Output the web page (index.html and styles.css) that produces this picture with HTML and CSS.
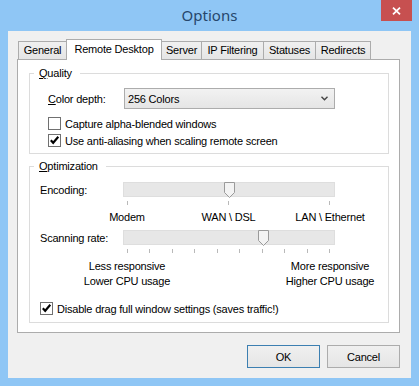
FILE: index.html
```html
<!DOCTYPE html>
<html>
<head>
<meta charset="utf-8">
<title>Options</title>
<link rel="stylesheet" href="styles.css">
</head>
<body>
<div class="window">
  <div class="titlebar">
    <span></span>
    <div class="title">Options</div>
    <div class="close-wrap">
      <button class="close" aria-label="Close">
        <svg width="9" height="8" viewBox="0 0 9 8"><path d="M1 0.7 L8 7.3 M8 0.7 L1 7.3" stroke="#fff" stroke-width="1.8" fill="none"/></svg>
      </button>
    </div>
  </div>
  <div class="client">
    <div class="tabs">
      <div class="tab t-general">General</div>
      <div class="tab active t-remote">Remote Desktop</div>
      <div class="tab t-server">Server</div>
      <div class="tab t-ip">IP Filtering</div>
      <div class="tab t-status">Statuses</div>
      <div class="tab t-redir">Redirects</div>
    </div>
    <div class="page">
      <fieldset class="group">
        <legend><u>Q</u>uality</legend>
        <div class="qbody">
          <div class="depth">
            <span class="label"><u>C</u>olor depth:</span>
            <div class="select">
              <span>256 Colors</span>
              <svg width="7" height="5" viewBox="0 0 7 5"><path d="M0.5 0.8 L3.5 3.8 L6.5 0.8" stroke="#444" stroke-width="1.4" fill="none"/></svg>
            </div>
          </div>
          <div class="check first">
            <span class="cb"></span>
            <span>Capture alpha-blended windows</span>
          </div>
          <div class="check">
            <span class="cb"><svg width="11" height="11" viewBox="0 0 11 11"><path d="M1.8 5.2 L4.2 7.8 L9.3 1.8" stroke="#000" stroke-width="2.1" fill="none"/></svg></span>
            <span>Use anti-aliasing when scaling remote screen</span>
          </div>
        </div>
      </fieldset>
      <fieldset class="group opt">
        <legend><u>O</u>ptimization</legend>
        <div class="obody">
          <div class="srow">
            <span class="slabel">Encoding:</span>
            <div class="track">
              <svg class="thumb" style="left:100px" width="11" height="16" viewBox="0 0 11 16"><path d="M0.5 0.5 H10.5 V10.5 L5.5 15.5 L0.5 10.5 Z" fill="#f3f3f3" stroke="#9a9a9a"/></svg>
            </div>
          </div>
          <div class="ticks"><i></i><i></i><i></i></div>
          <div class="marks">
            <span>Modem</span>
            <span>WAN \ DSL</span>
            <span>LAN \ Ethernet</span>
          </div>
          <div class="srow second">
            <span class="slabel">Scanning rate:</span>
            <div class="track">
              <svg class="thumb" style="left:134px" width="11" height="16" viewBox="0 0 11 16"><path d="M0.5 0.5 H10.5 V10.5 L5.5 15.5 L0.5 10.5 Z" fill="#f3f3f3" stroke="#9a9a9a"/></svg>
            </div>
          </div>
          <div class="ticks"><i></i><i></i><i></i><i></i><i></i><i></i><i></i><i></i><i></i><i></i></div>
          <div class="marks two">
            <span><b>Less responsive</b><b>Lower CPU usage</b></span>
            <span><b>More responsive</b><b>Higher CPU usage</b></span>
          </div>
          <div class="check drag">
            <span class="cb"><svg width="11" height="11" viewBox="0 0 11 11"><path d="M1.8 5.2 L4.2 7.8 L9.3 1.8" stroke="#000" stroke-width="2.1" fill="none"/></svg></span>
            <span>Disable drag full window settings (saves traffic!)</span>
          </div>
        </div>
      </fieldset>
    </div>
    <div class="buttons">
      <button class="btn default">OK</button>
      <button class="btn">Cancel</button>
    </div>
  </div>
</div>
</body>
</html>
```

FILE: styles.css
```css
* { box-sizing: border-box; }
html, body { margin: 0; padding: 0; }
body {
  width: 419px;
  height: 386px;
  overflow: hidden;
  background: #8fc6f5;
  font: 11px "Liberation Sans", Arial, sans-serif;
  letter-spacing: -0.2px;
  color: #000;
}
.window {
  width: 419px;
  height: 386px;
  display: flex;
  flex-direction: column;
}
.titlebar {
  height: 31px;
  display: grid;
  grid-template-columns: 1fr auto 1fr;
}
.title {
  font: 15px "Noto Sans", sans-serif;
  letter-spacing: 0;
  color: #26466c;
  line-height: 30px;
}
.close-wrap {
  display: flex;
  justify-content: flex-end;
  align-items: flex-start;
  padding-right: 7px;
}
.close {
  width: 31px;
  height: 21px;
  background: #c75050;
  border: 0;
  padding: 0;
  display: flex;
  align-items: center;
  justify-content: center;
}
.client {
  margin-left: 8px;
  width: 403px;
  height: 347px;
  background: #f0f0f0;
  padding-top: 8px;
  display: flex;
  flex-direction: column;
}
.tabs {
  display: flex;
  align-items: flex-end;
  height: 20px;
  padding-left: 10px;
}
.tab {
  height: 18px;
  border: 1px solid #acacac;
  border-bottom: 0;
  background: linear-gradient(#f0f0f0, #e5e5e5);
  display: flex;
  align-items: center;
  justify-content: center;
  margin-left: -1px;
  line-height: 13px;
  white-space: nowrap;
}
.tab.active {
  height: 21px;
  margin-bottom: -1px;
  background: #fff;
  position: relative;
  z-index: 1;
  padding-bottom: 2px;
}
.t-general { width: 49px; margin-left: 0; }
.t-remote { width: 96px; }
.t-server { width: 41px; }
.t-ip { width: 63px; }
.t-status { width: 53px; }
.t-redir { width: 56px; }
.page {
  margin-left: 9px;
  width: 383px;
  height: 274px;
  border: 1px solid #acacac;
  background: #fff;
  padding: 7px 10px 0 11px;
}
fieldset.group {
  margin: 0;
  padding: 0;
  border: 1px solid #dcdcdc;
  min-width: 0;
}
fieldset.opt { margin-top: 6px; }
legend {
  padding: 0 8px 0 5px;
  margin-left: 4px;
  line-height: 13px;
}
.qbody { padding: 8px 10px 6px 18px; }
.obody { padding: 9px 10px 7px 10px; }
.depth {
  display: flex;
  align-items: center;
  height: 21px;
}
.depth .label { width: 76px; }
.select {
  width: 211px;
  height: 21px;
  border: 1px solid #acacac;
  background: linear-gradient(#f2f2f2, #e5e5e5);
  display: flex;
  align-items: center;
  justify-content: space-between;
  padding: 0 6px 0 3px;
}
.check {
  display: flex;
  align-items: center;
  gap: 4px;
  height: 13px;
  margin-top: 4px;
  white-space: nowrap;
}
.check.first { margin-top: 8px; }
.check.drag { margin-top: 13px; }
.cb {
  width: 13px;
  height: 13px;
  flex: none;
  border: 1px solid #707070;
  background: #fff;
  display: flex;
  align-items: center;
  justify-content: center;
}
.srow {
  display: flex;
  align-items: center;
  height: 15px;
}
.srow.second { margin-top: 6px; }
.slabel { width: 83px; }
.track {
  width: 212px;
  height: 15px;
  background: #e7e7e7;
  border: 1px solid #dedede;
  position: relative;
}
.thumb {
  position: absolute;
  top: -1px;
}
.ticks {
  margin: 4px 0 0 87px;
  width: 203px;
  height: 4px;
  display: flex;
  justify-content: space-between;
}
.ticks i {
  width: 1px;
  height: 4px;
  background: #b9b9b9;
}
.marks {
  margin: 6px 0 0 87px;
  width: 203px;
  display: flex;
  justify-content: space-between;
  line-height: 13px;
}
.marks span {
  width: 0;
  display: flex;
  flex-direction: column;
  align-items: center;
  white-space: nowrap;
}
.marks.two { line-height: 15px; }
.marks b { font-weight: normal; }
.buttons {
  display: flex;
  justify-content: flex-end;
  gap: 7px;
  padding-right: 11px;
  margin-top: 12px;
}
.btn {
  width: 73px;
  height: 23px;
  border: 1px solid #acacac;
  background: linear-gradient(#f0f0f0, #e5e5e5);
  font: 11px "Liberation Sans", Arial, sans-serif;
  letter-spacing: -0.2px;
  color: #000;
  padding: 0;
}
.btn.default { border-color: #3c7fb1; }
```
